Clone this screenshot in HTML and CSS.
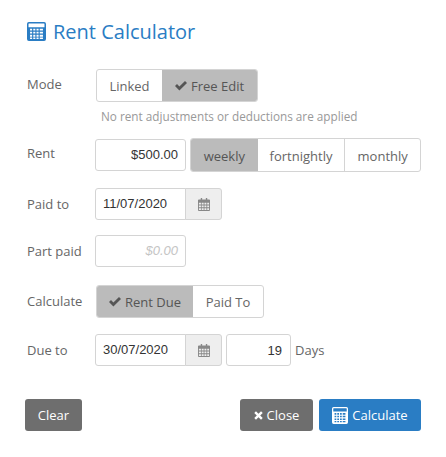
FILE: index.html
```html
<!DOCTYPE html>
<html lang="en">
<head>
    <meta charset="UTF-8">
    <title>Rent Calculator</title>
    <link rel="stylesheet" href="styles.css">
</head>
<body>
    <svg class="icon-defs" width="0" height="0">
        <symbol id="calc" viewBox="0 0 20 20" preserveAspectRatio="none">
            <path fill="currentColor" fill-rule="evenodd" d="M2 0h16a2 2 0 0 1 2 2v16a2 2 0 0 1-2 2H2a2 2 0 0 1-2-2V2a2 2 0 0 1 2-2zM2 1.600a.4.4 0 0 0-.4.4v3.400h16.800V2a.4.4 0 0 0-.4-.4zM3.200 7v2h2.200V7zm3.400 0v2h2.200V7zm3.400 0v2h2.200V7zm3.400 0v2h3.400V7zM3.200 10.200v2h2.200v-2zm3.400 0v2h2.200v-2zm3.400 0v2h2.200v-2zm3.400 0v2h3.400v-2zM3.200 13.400v2h2.200v-2zm3.400 0v2h2.200v-2zm3.400 0v2h2.200v-2zm3.400 0v2h3.400v-2zM3.200 16.400v1.600h2.200v-1.600zm3.400 0v1.600h2.200v-1.600zm3.400 0v1.600h2.200v-1.600zm3.400 0v1.600h3.400v-1.600z"/>
        </symbol>
        <symbol id="cal" viewBox="0 0 13 14">
            <path fill="currentColor" fill-rule="evenodd" d="M3 0h1.500v1.500h4V0H10v1.500h2a1 1 0 0 1 1 1V13a1 1 0 0 1-1 1H1a1 1 0 0 1-1-1V2.500a1 1 0 0 1 1-1h2zM1 5v2h2.200V5zm3 0v2h2.100V5zm3 0v2h2.100V5zm3 0v2h2V5zM1 8v2h2.200V8zm3 0v2h2.100V8zm3 0v2h2.100V8zm3 0v2h2V8zM1 11v2h2.200v-2zm3 0v2h2.100v-2zm3 0v2h2.100v-2zm3 0v2h2v-2z"/>
        </symbol>
        <symbol id="check" viewBox="0 0 12 10">
            <path fill="currentColor" d="M0 5 2 3 4.400 5.400 10 0 12 2 4.400 9.600z"/>
        </symbol>
        <symbol id="times" viewBox="0 0 10 10">
            <path fill="currentColor" d="M2.200.3 5 3.100 7.800.3 9.700 2.200 6.900 5l2.800 2.800-1.900 1.900L5 6.900 2.200 9.700.3 7.800 3.100 5 .3 2.200z"/>
        </symbol>
    </svg>

    <div class="dialog">
        <h1 class="title">
            <svg class="title-icon"><use href="#calc"/></svg>
            Rent Calculator
        </h1>

        <div class="form">
            <div class="row row-mode">
                <span class="label">Mode</span>
                <div class="stack">
                    <div class="toggle">
                        <span class="opt opt-linked">Linked</span>
                        <span class="opt opt-free active"><svg class="check"><use href="#check"/></svg> Free Edit</span>
                    </div>
                    <div class="hint">No rent adjustments or deductions are applied</div>
                </div>
            </div>

            <div class="row row-rent">
                <span class="label">Rent</span>
                <div class="field money">$500.00</div>
                <div class="toggle period">
                    <span class="opt opt-weekly active">weekly</span>
                    <span class="opt opt-fort">fortnightly</span>
                    <span class="opt opt-month">monthly</span>
                </div>
            </div>

            <div class="row">
                <span class="label">Paid to</span>
                <div class="date">
                    <div class="field date-text">11/07/2020</div>
                    <div class="addon"><svg class="cal"><use href="#cal"/></svg></div>
                </div>
            </div>

            <div class="row row-part">
                <span class="label">Part paid</span>
                <div class="field money placeholder">$0.00</div>
            </div>

            <div class="row row-calc">
                <span class="label">Calculate</span>
                <div class="toggle">
                    <span class="opt opt-due active"><svg class="check"><use href="#check"/></svg> Rent Due</span>
                    <span class="opt opt-paid">Paid To</span>
                </div>
            </div>

            <div class="row row-due">
                <span class="label">Due to</span>
                <div class="date">
                    <div class="field date-text">30/07/2020</div>
                    <div class="addon"><svg class="cal"><use href="#cal"/></svg></div>
                </div>
                <div class="field days">19</div>
                <span class="unit">Days</span>
            </div>
        </div>

        <div class="actions">
            <button class="btn btn-grey btn-clear">Clear</button>
            <div class="actions-right">
                <button class="btn btn-grey btn-close"><svg class="times"><use href="#times"/></svg> Close</button>
                <button class="btn btn-blue btn-calc"><svg class="btn-icon"><use href="#calc"/></svg> Calculate</button>
            </div>
        </div>
    </div>
</body>
</html>
```

FILE: styles.css
```css
* {
    box-sizing: border-box;
}
html, body {
    margin: 0;
    background-color: white;
}
body {
    font-family: 'Open Sans', sans-serif;
    font-size: 13px;
    color: #666;
}
.icon-defs {
    display: block;
}
.dialog {
    width: 446px;
    padding: 19px 25px 0;
}
.title {
    display: flex;
    align-items: center;
    gap: 7px;
    margin: 0 0 0 2px;
    height: 24px;
    font-size: 20px;
    font-weight: 400;
    color: #2a7dc4;
}
.title-icon {
    width: 19px;
    height: 19px;
}
.form {
    display: flex;
    flex-direction: column;
    gap: 16px;
    margin-top: 26px;
}
.row {
    display: flex;
    align-items: center;
    height: 32px;
}
.label {
    width: 68px;
    margin-left: 2px;
    flex: none;
}
.row-mode {
    height: 53px;
    align-items: flex-start;
}
.row-mode .label {
    margin-top: 6px;
}
.row-rent {
    height: 34px;
}
.row-rent .label {
    margin-top: -4px;
}
.row-part {
    margin-top: -1px;
}
.row-calc {
    height: 33px;
    margin-top: 2px;
}
.row-calc .label {
    margin-top: -2px;
}
.stack {
    display: flex;
    flex-direction: column;
    align-items: flex-start;
    margin-left: 1px;
}
.toggle {
    display: flex;
    height: 33px;
    border: 1px solid #d4d4d4;
    border-radius: 3px;
    overflow: hidden;
    background-color: white;
}
.row-calc .toggle {
    margin-left: 1px;
}
.opt {
    display: flex;
    align-items: center;
    justify-content: center;
    gap: 4px;
    padding-top: 1px;
}
.opt.active {
    background-color: #bbb;
    color: #555;
}
.opt-linked { width: 65px; }
.opt-free { width: 95px; }
.opt-due { width: 96px; }
.opt-paid { width: 70px; }
.period {
    height: 34px;
    margin-left: 4px;
    width: 231px;
}
.opt-weekly { width: 67px; }
.opt-fort { width: 88px; border-right: 1px solid #d4d4d4; }
.opt-month { width: 75px; }
.check {
    width: 12px;
    height: 10px;
}
.hint {
    margin: 6px 0 0 5px;
    font-size: 11.75px;
    color: #999;
    white-space: nowrap;
}
.field {
    display: flex;
    align-items: center;
    height: 32px;
    background-color: white;
    border: 1px solid #d4d4d4;
    border-radius: 3px;
    font-family: 'Liberation Sans', Arial, sans-serif;
    font-size: 13px;
    color: #333;
}
.money {
    width: 91px;
    justify-content: flex-end;
    padding: 0 7px 1px 0;
}
.placeholder {
    color: #c4c4c4;
    font-style: italic;
}
.date {
    display: flex;
}
.date-text {
    width: 91px;
    padding: 0 0 1px 7px;
    border-radius: 3px 0 0 3px;
}
.addon {
    display: flex;
    align-items: center;
    justify-content: center;
    width: 37px;
    height: 32px;
    margin-left: -1px;
    background-color: #eee;
    border: 1px solid #d4d4d4;
    border-radius: 0 3px 3px 0;
    color: #888;
}
.cal {
    width: 12px;
    height: 13px;
}
.days {
    width: 65px;
    margin-left: 4px;
    justify-content: flex-end;
    padding: 0 8px 0 0;
}
.unit {
    margin-left: 4px;
}
.actions {
    display: flex;
    justify-content: space-between;
    margin-top: 33px;
    width: 396px;
}
.actions-right {
    display: flex;
    gap: 6px;
}
.btn {
    display: flex;
    align-items: center;
    justify-content: center;
    gap: 4px;
    height: 32px;
    padding: 0;
    border: none;
    border-radius: 3px;
    font-family: 'Open Sans', sans-serif;
    font-size: 13px;
    color: white;
}
.btn-grey {
    background-color: #6e6e6e;
}
.btn-blue {
    background-color: #2a7dc4;
}
.btn-clear { width: 57px; }
.btn-close { width: 73px; }
.btn-calc { width: 102px; }
.times {
    width: 9px;
    height: 9px;
}
.btn-icon {
    width: 16px;
    height: 17px;
}
```
